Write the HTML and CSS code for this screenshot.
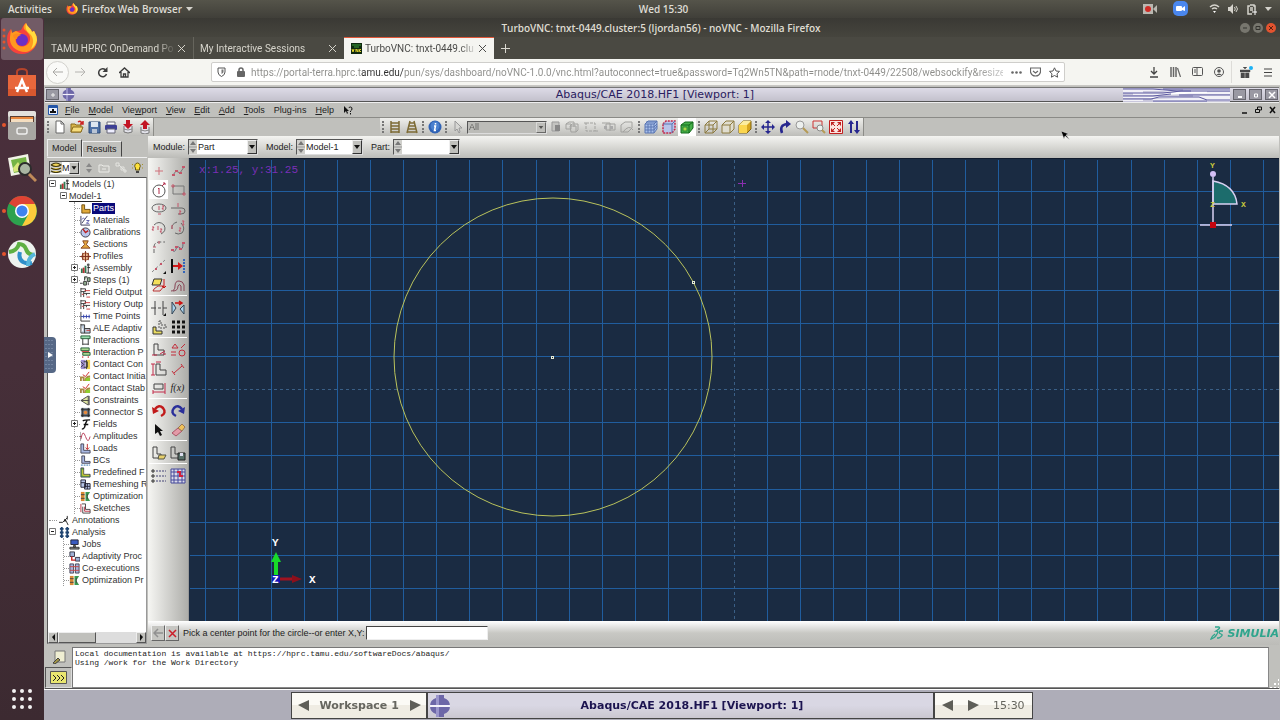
FILE: index.html
```
<!DOCTYPE html>
<html lang="en">
<head>
	<meta charset="utf-8">
	<title>TurboVNC: tnxt-0449.cluster:5 (ljordan56) - noVNC</title>
	<link rel="stylesheet" href="styles.css">
</head>
<body>

<!-- icons used more than once -->
<svg class="defs" aria-hidden="true">
	<symbol id="cde" viewBox="0 0 22 22">
		<path d="M7 0h8v3q6 2 6 8t-6 8v3H7v-3q-6-2-6-8t6-8z" fill="#6d67a8"/>
		<path d="M7 0h3v22H7z" fill="#9b96cc"/><path d="M1 10h20v2H1z" fill="#f4f2fb"/>
	</symbol>
	<symbol id="plus" viewBox="0 0 8 8"><path d="M.5.5h6v6h-6z" fill="#fff" stroke="#777"/><path d="M2 3.500h3M3.500 2v3" stroke="#222"/></symbol>
	<symbol id="minus" viewBox="0 0 8 8"><path d="M.5.5h6v6h-6z" fill="#fff" stroke="#777"/><path d="M2 3.500h3" stroke="#222"/></symbol>
	<symbol id="down" viewBox="0 0 8 12"><path d="M1 4h6L4 8z" fill="#111"/></symbol>
	<symbol id="spin" viewBox="0 0 8 14"><path d="M1 5l3-4 3 4zM1 9l3 4 3-4z" fill="#777"/><path d="M0 7h8" stroke="#999"/></symbol>
	<symbol id="assembly" viewBox="0 0 12 12"><path d="M1 11V6h2v5zM5 11V3h2v8z" fill="#2f7a52"/><path d="M3 11V5h2v6z" fill="#b33"/><path d="M9 3v8M8 5h3M7 11h5" stroke="#222"/><circle cx="9" cy="2" r="1.500" fill="#555"/></symbol>
	<symbol id="outputs" viewBox="0 0 12 12"><path d="M1 1v10M1 2h5v3H1M4 5v6M4 7h7M7 7v2" stroke="#333" fill="none"/><path d="M5 4h6M7 11h4M2 8h2" stroke="#c33"/></symbol>
	<symbol id="contact" viewBox="0 0 12 12"><path d="M1 11V7h3v4M6 11c0-3 2-5 5-5" stroke="#a84" fill="none" stroke-width="2"/><path d="M3 4l3 2 4-5" stroke="#c22" fill="none"/><path d="M6 11V8l5-1v4z" fill="#8fce2d"/></symbol>
	<symbol id="optim" viewBox="0 0 12 12"><path d="M1 1h4v10H1z" fill="#d98a35"/><path d="M6 1h5L8 6l3 5H6z" fill="#3b9b51"/><path d="M1 4h4M1 8h4M8 3v6" stroke="#444"/></symbol>
	<symbol id="interaction" viewBox="0 0 12 12"><path d="M1 1h10v3H1z" fill="#9bdcae" stroke="#225c38"/><path d="M3 4v7M9 4v7M3 10h6" stroke="#333"/></symbol>
</svg>

<header class="gnome-bar">
	<button class="bar-btn">Activities</button>
	<button class="bar-btn app-menu">
		<svg width="12" height="12" viewBox="0 0 32 32"><use href="#firefox"/></svg>
		Firefox Web Browser
		<svg width="7" height="5" viewBox="0 0 7 5"><path d="M0 0h7L3 4z" fill="#d5d3cc"/></svg>
	</button>
	<time class="clock">Wed 15:30</time>
	<div class="tray">
		<svg width="14" height="10" viewBox="0 0 14 10"><path d="M0 0h10v10H0zM10 5l4-4v8z" fill="#b9b7b0"/><circle cx="5" cy="5" r="3" fill="#cf2b25"/></svg>
		<svg class="zoom-app" width="16" height="16" viewBox="0 0 16 16"><rect width="15" height="15" rx="5" fill="#4a87ee"/><rect x="3" y="5" width="6" height="5" rx="1" fill="#fff"/><path d="M9 7l3-2v5L9 9z" fill="#fff"/></svg>
		<svg width="11" height="10" viewBox="0 0 11 10"><path d="M1 3q4.500-4 9 0M3 5q2.500-2 5 0" stroke="#d5d3cc" stroke-width="1.500" fill="none"/><path d="M4 7h3L5.500 9z" fill="#fff"/></svg>
		<svg width="11" height="10" viewBox="0 0 11 10"><path d="M0 3h2l3-3v10L2 7H0z" fill="#d5d3cc"/><path d="M6.500 3q1.500 2 0 4M8 2q3 3 0 6" stroke="#d5d3cc" fill="none"/></svg>
		<svg width="10" height="11" viewBox="0 0 10 11"><path d="M3 1h4v1h1v4M5 10H1V2h2M3 4h3M3 6h3" stroke="#d5d3cc" stroke-width="1.500" fill="none"/><path d="M5 8h5M8 6v5" stroke="#fff"/></svg>
		<svg width="7" height="5" viewBox="0 0 7 5"><path d="M0 0h7L3 4z" fill="#d5d3cc"/></svg>
	</div>
</header>

<div class="desktop">
<nav class="dock" aria-label="Dock">
	<button class="dock-item current" aria-label="Firefox">
		<svg class="dots" width="4" height="22" viewBox="0 0 4 22"><g fill="#e4552d"><circle cx="2" cy="2" r="1.500"/><circle cx="2" cy="8" r="1.500"/><circle cx="2" cy="14" r="1.500"/><circle cx="2" cy="20" r="1.500"/></g></svg>
		<svg width="32" height="32" viewBox="0 0 32 32">
			<g id="firefox">
				<path d="M16 31C7 31 1 25 1 16 1 11 3 8 5 6l1 4 4-2q3 0 5-1c2-3 2-5 5-7 1 4 5 5 6 9l2-1q3 5 3 9c0 8-7 14-15 14z" fill="#f5423c"/>
				<path d="M5 6l1 4 4-2 6 3c-6 0-8 6-5 10 4 5 12 2 13-4 1-5-3-8-6-11-1-3 1-5 2-6 1 4 5 5 6 9l2-1q3 5 3 9c0 6-5 11-11 12C9 29 3 22 4 14z" fill="#ff9a1f"/>
				<path d="M20 0c1 4 5 5 6 9l2-1q3 5 3 9c-1 4-3 7-6 9 3-6 3-11-1-15-4-3-5-6-4-11z" fill="#ffdc3e"/>
				<circle cx="16" cy="17" r="6" fill="#6a2fc4"/><path d="M7 12q4-3 8 0c-3 1-4 2-4 4-2 0-4-1-4-4z" fill="#ff8a1e"/>
			</g>
		</svg>
	</button>
	<button class="dock-item" aria-label="Ubuntu Software">
		<svg width="30" height="30" viewBox="0 0 30 30"><path d="M10 8V5q0-3 5-3t5 3v3" stroke="#b5442b" stroke-width="2" fill="none"/><path d="M1 8h28v21H1z" fill="#e8673c"/><path d="M1 22h28v7H1z" fill="#d8582f"/><path d="M10 25l5-12 5 12M8 21h14" stroke="#fff" stroke-width="2.500" fill="none"/></svg>
	</button>
	<button class="dock-item" aria-label="Files">
		<svg class="dots" width="4" height="4" viewBox="0 0 4 4"><circle cx="2" cy="2" r="2" fill="#e4552d"/></svg>
		<svg width="30" height="32" viewBox="0 0 30 32"><rect x="1" y="2" width="28" height="29" rx="3" fill="#b8b6b2"/><rect x="1" y="2" width="28" height="6" rx="2" fill="#e3e1dd"/><path d="M3 7h24v7H3z" fill="#5a3e32"/><path d="M4 8h22v5H4z" fill="#e9883f"/><path d="M4 10h22v4H4z" fill="#f4ddc0"/><path d="M1 13h28v15q0 3-3 3H4q-3 0-3-3z" fill="#a8a6a2"/><rect x="10" y="19" width="10" height="6" rx="2" fill="none" stroke="#eee" stroke-width="1.500"/></svg>
	</button>
	<button class="dock-item" aria-label="Image viewer">
		<svg width="30" height="32" viewBox="0 0 30 32"><path d="M1 6l20-4 3 18-20 4z" fill="#f1f3e6"/><path d="M4 8l15-3 2 13-14 3z" fill="#75b445"/><path d="M6 16l5-6 5 8-9 2z" fill="#d9e77d"/><circle cx="18" cy="17" r="6" fill="#a9b5a2" stroke="#2c2c2c" stroke-width="2"/><path d="M22 22l7 7" stroke="#c08a58" stroke-width="3"/></svg>
	</button>
	<button class="dock-item" aria-label="Chrome">
		<svg class="dots" width="4" height="4" viewBox="0 0 4 4"><circle cx="2" cy="2" r="2" fill="#e4552d"/></svg>
		<svg width="30" height="30" viewBox="0 0 30 30"><circle cx="15" cy="15" r="15" fill="#2da24e"/><path d="M15 15L2 7.500A15 15 0 0 1 28 7.500z" fill="#df4334"/><path d="M15 8h13a15 15 0 0 1-13 22l6-11z" fill="#fccb3c"/><circle cx="15" cy="15" r="7" fill="#fff"/><circle cx="15" cy="15" r="5.500" fill="#3f83ee"/></svg>
	</button>
	<button class="dock-item" aria-label="Cisco AnyConnect">
		<svg class="dots" width="4" height="4" viewBox="0 0 4 4"><circle cx="2" cy="2" r="2" fill="#e4552d"/></svg>
		<svg width="30" height="30" viewBox="0 0 30 30"><circle cx="15" cy="15" r="14" fill="#eef3ef"/><path d="M2 13q8-1 10-8 5 0 7 5 2 6 8 6" stroke="#5db043" stroke-width="4" fill="none"/><path d="M13 13q-2 7 3 10 4 2 9 1" stroke="#2f8fc9" stroke-width="4" fill="none"/><path d="M28 15q-7 3-7 12" stroke="#55b6dc" stroke-width="4" fill="none"/></svg>
	</button>
	<button class="dock-item apps" aria-label="Show applications">
		<svg width="22" height="22" viewBox="0 0 22 22"><g fill="#f4f2f3"><circle cx="3" cy="3" r="2"/><circle cx="11" cy="3" r="2"/><circle cx="19" cy="3" r="2"/><circle cx="3" cy="11" r="2"/><circle cx="11" cy="11" r="2"/><circle cx="19" cy="11" r="2"/><circle cx="3" cy="19" r="2"/><circle cx="11" cy="19" r="2"/><circle cx="19" cy="19" r="2"/></g></svg>
	</button>
</nav>

<main class="browser">
	<div class="browser-title">
		<h1>TurboVNC: tnxt-0449.cluster:5 (ljordan56) - noVNC - Mozilla Firefox</h1>
		<div class="win-buttons">
			<button aria-label="Minimize"><svg width="10" height="10" viewBox="0 0 10 10"><circle cx="5" cy="5" r="5" fill="#77766e"/><path d="M3 5h4" stroke="#33322e"/></svg></button>
			<button aria-label="Maximize"><svg width="10" height="10" viewBox="0 0 10 10"><circle cx="5" cy="5" r="5" fill="#77766e"/><path d="M3 3.500h4v3H3z" stroke="#33322e" fill="none"/></svg></button>
			<button aria-label="Close"><svg width="10" height="10" viewBox="0 0 10 10"><circle cx="5" cy="5" r="5" fill="#e2532f"/><path d="M3 3l4 4M7 3L3 7" stroke="#5a1f10"/></svg></button>
		</div>
	</div>
	<div class="tabs">
		<div class="tab"><a href="#">TAMU HPRC OnDemand Po</a><button aria-label="Close tab"><svg width="7" height="7" viewBox="0 0 7 7"><path d="M0 0l7 7M7 0L0 7" stroke="currentColor"/></svg></button></div>
		<div class="tab wide"><a href="#">My Interactive Sessions</a><button aria-label="Close tab"><svg width="7" height="7" viewBox="0 0 7 7"><path d="M0 0l7 7M7 0L0 7" stroke="currentColor"/></svg></button></div>
		<div class="tab active"><svg class="favicon" width="11" height="11" viewBox="0 0 11 11"><path d="M0 0h11v11H0z" fill="#102a10"/><path d="M1 2h9M3 4h5" stroke="#3aa03a"/><path d="M1 6l1 3 1-3M5 9V6l2 3V6M10 6.500H8.500v2H10" stroke="#e2d52c" fill="none"/></svg><a href="#">TurboVNC: tnxt-0449.clu</a><button aria-label="Close tab"><svg width="7" height="7" viewBox="0 0 7 7"><path d="M0 0l7 7M7 0L0 7" stroke="currentColor"/></svg></button></div>
		<button class="new-tab" aria-label="New tab"><svg width="9" height="9" viewBox="0 0 9 9"><path d="M4.500 0v9M0 4.500h9" stroke="#dad8d0"/></svg></button>
	</div>
	<div class="nav-bar">
		<button class="back" aria-label="Back"><svg width="11" height="10" viewBox="0 0 11 10"><path d="M11 5H1M5 1L1 5l4 4" stroke="#a9a8a5" fill="none"/></svg></button>
		<button aria-label="Forward"><svg width="11" height="10" viewBox="0 0 11 10"><path d="M0 5h10M6 1l4 4-4 4" stroke="#b4b3b0" fill="none"/></svg></button>
		<button aria-label="Reload"><svg width="11" height="11" viewBox="0 0 11 11"><path d="M9 3.500A4 4 0 1 0 9.500 7" stroke="#3c3c3c" stroke-width="1.500" fill="none"/><path d="M10.500 0v5h-5z" fill="#3c3c3c"/></svg></button>
		<button aria-label="Home"><svg width="11" height="11" viewBox="0 0 11 11"><path d="M0 6l5.500-5L11 6M2 5v5h7V5M4.500 10V7h2v3" stroke="#3c3c3c" stroke-width="1.300" fill="none"/></svg></button>
		<div class="url-box">
			<svg width="9" height="10" viewBox="0 0 9 10"><path d="M1 1h7v4q0 3-3.500 4.500Q1 8 1 5z" stroke="#555" fill="none"/><path d="M4.500 2.500h2V5q0 1-2 2z" fill="#777"/></svg>
			<svg class="lock" width="8" height="10" viewBox="0 0 8 10"><path d="M2 5V3q0-2 2-2t2 2v2" stroke="#666" stroke-width="1.500" fill="none"/><rect y="4" width="8" height="6" rx="1" fill="#666"/></svg>
			<input class="url" aria-label="Address" value="https://portal-terra.hprc.tamu.edu/pun/sys/dashboard/noVNC-1.0.0/vnc.html?autoconnect=true&amp;password=Tq2Wn5TN&amp;path=rnode/tnxt-0449/22508/websockify&amp;resize=">
			<button aria-label="Page actions"><svg width="11" height="3" viewBox="0 0 11 3"><g fill="#666"><circle cx="1.500" cy="1.500" r="1.300"/><circle cx="5.500" cy="1.500" r="1.300"/><circle cx="9.500" cy="1.500" r="1.300"/></g></svg></button>
			<button aria-label="Pocket"><svg width="11" height="10" viewBox="0 0 11 10"><path d="M.5 1h10v4q-1 4-5 4t-5-4z M3 4l2.500 2L8 4" stroke="#666" stroke-width="1.200" fill="none"/></svg></button>
			<button aria-label="Bookmark"><svg width="11" height="11" viewBox="0 0 11 11"><path d="M5.500.8L7 4l3.500.4L8 6.800l.6 3.400-3.100-1.700-3.100 1.700L3 6.800.5 4.400 4 4z" stroke="#555" fill="none"/></svg></button>
		</div>
		<div class="nav-tools">
			<button aria-label="Downloads"><svg width="10" height="11" viewBox="0 0 10 11"><path d="M5 0v7M2 4l3 3 3-3M1 10h8" stroke="#444" stroke-width="1.300" fill="none"/></svg></button>
			<button aria-label="Library"><svg width="11" height="10" viewBox="0 0 11 10"><path d="M1 0v10M3.500 0v10M6 0v10" stroke="#666" stroke-width="1.500"/><path d="M7.500 1l3 9" stroke="#666" stroke-width="1.200"/></svg></button>
			<button aria-label="Sidebar"><svg width="11" height="10" viewBox="0 0 11 10"><rect x=".5" y=".5" width="10" height="8" rx="1" stroke="#555" fill="none"/><path d="M5 1v8M2 3h2M2 5h2" stroke="#555"/></svg></button>
			<button aria-label="Account"><svg width="10" height="10" viewBox="0 0 10 10"><circle cx="5" cy="5" r="4.500" stroke="#555" fill="none"/><circle cx="5" cy="4" r="1.800" fill="#555"/><path d="M2 8q3-3 6 0z" fill="#555"/></svg></button>
			<span class="divider"></span>
			<button aria-label="What's new"><svg width="13" height="12" viewBox="0 0 13 12"><path d="M0 4h10v2H0zM1 7h3.500v5H1zM5.500 7H9v5H5.500zM3 1l2 2 2-2" fill="#4a4a4a" stroke="#4a4a4a" stroke-width=".5"/><circle cx="11" cy="2" r="2" fill="#1cb2f5"/></svg></button>
			<button aria-label="Menu"><svg width="8" height="9" viewBox="0 0 8 9"><path d="M0 1h8M0 4.500h8M0 8h8" stroke="#444"/></svg></button>
		</div>
	</div>

	<section class="remote">
		<button class="vnc-handle" aria-label="Show control bar"><svg width="12" height="36" viewBox="0 0 12 36"><path d="M2 3v30M5 3v30M8 3v30" stroke="#90a0bb" stroke-dasharray="1 3"/><path d="M4 15l5 3-5 3z" fill="#fff"/></svg></button>

		<div class="wm-title">
			<button class="wm-btn" aria-label="Window menu"><svg width="8" height="8" viewBox="0 0 8 8"><path d="M3 3h2v2H3z" stroke="#eee" fill="none"/></svg></button>
			<svg width="13" height="13"><use href="#cde"/></svg>
			<h2>Abaqus/CAE 2018.HF1 [Viewport: 1]</h2>
			<svg class="glitch" width="107" height="14" viewBox="0 0 107 14" preserveAspectRatio="none"><path d="M0 0h107v14H0z" fill="#c9c7dc"/><path d="M0 2h38l16 2h30M10 6h36l20-1h41M0 9h20l40 1h47M30 12h77M60 2h47M0 12h20M0 4h20M70 8h37" stroke="#fff" stroke-width="1.500" fill="none"/><path d="M0 1h30l24 2h14M40 1h67M0 5h40l18-2h49M0 8h30l18-2M56 7h51M0 11h28l8-2h40l8 3h23M30 13h54" stroke="#5b58a0" fill="none"/></svg>
			<button class="wm-btn" aria-label="Iconify"><svg width="8" height="8" viewBox="0 0 8 8"><path d="M2 6h4" stroke="#fff" stroke-width="2"/></svg></button>
			<button class="wm-btn" aria-label="Zoom"><svg width="8" height="8" viewBox="0 0 8 8"><path d="M2.500 3h3v3h-3z" stroke="#fff" fill="none"/></svg></button>
			<button class="wm-btn" aria-label="Close window"><svg width="8" height="8" viewBox="0 0 8 8"><path d="M1 1l6 6M7 1L1 7" stroke="#fff" stroke-width="1.500"/></svg></button>
		</div>

		<nav class="menu-bar">
			<svg width="10" height="10" viewBox="0 0 10 10"><path d="M.5.5h9v9h-9z" fill="#e7efff" stroke="#2456a8"/><path d="M1 1h8v2H1z" fill="#2456a8"/><path d="M2 7h6M5 4v2" stroke="#111" stroke-width="2"/></svg>
			<button><u>F</u>ile</button>
			<button><u>M</u>odel</button>
			<button>Vie<u>w</u>port</button>
			<button><u>V</u>iew</button>
			<button><u>E</u>dit</button>
			<button><u>A</u>dd</button>
			<button><u>T</u>ools</button>
			<button>Plu<u>g</u>-ins</button>
			<button><u>H</u>elp</button>
			<button aria-label="Context help"><svg width="10" height="9" viewBox="0 0 10 9"><path d="M1 0v7l2-2 1 3 1-1-1-2h2z" fill="#111"/><path d="M6 2q0-1 1.500-1T9 3q0 1-1.500 2v1M7.500 7v1.500" stroke="#111" fill="none"/></svg></button>
			<div class="mdi">
				<button aria-label="Minimize viewport"><svg width="7" height="8" viewBox="0 0 7 8"><path d="M1 7h5" stroke="#111" stroke-width="1.500"/></svg></button>
				<button aria-label="Restore viewport"><svg width="7" height="8" viewBox="0 0 7 8"><path d="M2.500 3V1h4v3H5M.5 3.500h4v3h-4z" stroke="#111" fill="none"/></svg></button>
				<button aria-label="Close viewport"><svg width="7" height="8" viewBox="0 0 7 8"><path d="M1 1l5 6M6 1L1 7" stroke="#111" stroke-width="1.500"/></svg></button>
			</div>
		</nav>

		<div class="tool-bar">
			<div class="tool-group">
				<i class="grip"></i>
				<button aria-label="New"><svg width="14" height="14" viewBox="0 0 14 14"><path d="M3 1h5l3 3v9H3z" fill="#fff" stroke="#666"/><path d="M8 1v3h3" stroke="#666" fill="none"/></svg></button>
				<button aria-label="Open"><svg width="14" height="14" viewBox="0 0 14 14"><path d="M1 4h4l1 1h5v7H1z" fill="#d9b64a" stroke="#8a6b1a"/><path d="M3 7h10l-2 5H1z" fill="#f6dc7c" stroke="#8a6b1a"/><path d="M8 2q3-2 4 2m-2 0h3V1" stroke="#c22" stroke-width="1.500" fill="none"/></svg></button>
				<button aria-label="Save"><svg width="14" height="14" viewBox="0 0 14 14"><path d="M2 2h11v11H2z" fill="#4f71a5" stroke="#2d4a77"/><path d="M4 2h7v5H4z" fill="#dfe7f0"/><path d="M5 9h5v4H5z" fill="#b9c4d4"/></svg></button>
				<button aria-label="Print"><svg width="14" height="14" viewBox="0 0 14 14"><path d="M3 2h8v3H3z" fill="#fff" stroke="#667"/><rect x="1" y="5" width="12" height="5" rx="1" fill="#3d3f95"/><path d="M3 9h8v4H3z" fill="#eef" stroke="#667"/></svg></button>
				<button aria-label="Import"><svg width="14" height="14" viewBox="0 0 14 14"><path d="M3 6v6q4 2 8 0V6" fill="#e4e4ec" stroke="#777"/><path d="M3 9q4 2 8 0" stroke="#888" fill="none"/><path d="M5 0h4v4h3L7 9 2 4h3z" fill="#c21524"/></svg></button>
				<button aria-label="Export"><svg width="14" height="14" viewBox="0 0 14 14"><path d="M3 7v6q4 2 8 0V7" fill="#e4e4ec" stroke="#777"/><path d="M3 10q4 2 8 0" stroke="#888" fill="none"/><path d="M5 9h4V5h3L7 0 2 5h3z" fill="#c21524"/></svg></button>
			</div>
			<div class="tool-group second">
				<i class="grip"></i>
				<button aria-label="Parallel"><svg width="14" height="14" viewBox="0 0 14 14"><path d="M3 1v12M11 1v12M3 3h8M3 6h8M3 9h8M3 12h8" stroke="#7d6b35" stroke-width="1.500"/></svg></button>
				<button aria-label="Perspective"><svg width="14" height="14" viewBox="0 0 14 14"><path d="M5 1L2 13M9 1l3 12M5 3h4M4 6h6M3 9h8M2 12h10" stroke="#7d6b35" stroke-width="1.500"/></svg></button>
				<i class="grip"></i>
				<button aria-label="Query"><svg width="14" height="14" viewBox="0 0 14 14"><circle cx="7" cy="7" r="6.500" fill="#2f62b5"/><circle cx="7" cy="6" r="4.500" fill="#4a80cf"/><path d="M7.500 3v1.500M6 6h1.500L6.500 10.500H8" stroke="#fff" stroke-width="1.500" fill="none"/></svg></button>
				<i class="grip"></i>
				<button class="wide" aria-label="Select"><svg width="14" height="14" viewBox="0 0 14 14"><path d="M4 1v10l2-2 2 4 1-1-1-4h3z" fill="#d7d7d4" stroke="#999"/></svg></button>
				<span class="drop disabled"><select aria-label="Selection filter" disabled><option>All</option></select><svg width="8" height="12"><use href="#down"/></svg></span>
				<button aria-label="Highlight"><svg width="14" height="14" viewBox="0 0 14 14"><path d="M3 2h7v9H3z" fill="#c4c4c1" stroke="#999"/><path d="M6 5h5v6H6z" fill="#888"/></svg></button>
				<button class="wide" aria-label="Nearest"><svg width="16" height="14" viewBox="0 0 16 14"><path d="M1 4l3-2h5v5M1 4h5v5H1zM5 6l2-2h6v6l-2 2H6zM5 6h6v6" fill="none" stroke="#a2a29f"/></svg></button>
				<button class="wide" aria-label="Drag shape"><svg width="16" height="14" viewBox="0 0 16 14"><path d="M3 3h9v8H3zM1 3h2M12 11h3" fill="none" stroke="#a2a29f" stroke-dasharray="3 1"/></svg></button>
				<button class="wide" aria-label="Inside"><svg width="16" height="14" viewBox="0 0 16 14"><path d="M1 3h8v8M5 4v6h9V4z" fill="none" stroke="#a2a29f"/><path d="M3 6h3v3H3zM9 6h3v3H9z" fill="#aaa"/></svg></button>
				<button class="wide" aria-label="Reset"><svg width="16" height="14" viewBox="0 0 16 14"><path d="M2 5l4-3h7v6l-4 4H2zM4 12q6-8 10-2" fill="none" stroke="#a2a29f"/></svg></button>
				<i class="grip"></i>
				<button class="wide" aria-label="Mesh"><svg width="14" height="14" viewBox="0 0 14 14"><path d="M1 4l3-3h9v8l-3 4H1z" fill="#a9c0ea" stroke="#5a76b3"/><path d="M1 4h9v9M10 4l3-3M4 4v9M7 4v9M1 7h9l3-3M1 10h9l3-4M2 2h10" stroke="#5a76b3" fill="none"/></svg></button>
				<button class="wide" aria-label="Seeds"><svg width="14" height="14" viewBox="0 0 14 14"><path d="M1 4l3-3h9v8l-3 4H1z" fill="#b9c4ea" stroke="#c3284a" stroke-width="1.500" stroke-dasharray="2 1"/><path d="M1 4h9v9M10 4l3-3" stroke="#5a76b3" fill="none"/></svg></button>
				<button class="wide pressed" aria-label="Geometry"><svg width="14" height="14" viewBox="0 0 14 14"><path d="M1 5l4-3h8v6l-4 5H1z" fill="#46b04a" stroke="#12681a"/><path d="M1 5h8v8M9 5l4-3" stroke="#12681a" fill="none"/><path d="M3 7h4v4H3z" fill="#a8d84a" stroke="#2d8a30"/></svg></button>
				<i class="grip"></i>
				<button aria-label="Wireframe"><svg width="14" height="14" viewBox="0 0 14 14"><path d="M1 5h8v8H1zM5 1h8v8H5zM1 5l4-4M9 5l4-4M9 13l4-4M1 13l4-4" fill="none" stroke="#8c7a3e"/></svg></button>
				<button aria-label="Hidden"><svg width="14" height="14" viewBox="0 0 14 14"><path d="M1 5l4-4h8v8l-4 4H1zM1 5h8v8M9 5l4-4" fill="#e0ddcf" stroke="#8c7a3e"/></svg></button>
				<button aria-label="Shaded"><svg width="14" height="14" viewBox="0 0 14 14"><path d="M1 5l4-4h8v8l-4 4H1z" fill="#d6a520" stroke="#7d6210"/><path d="M1 5h8v8H1z" fill="#fbd64f"/><path d="M1 5l4-4h8L9 5z" fill="#fbeca0"/></svg></button>
				<i class="grip"></i>
				<button aria-label="Pan"><svg width="14" height="14" viewBox="0 0 14 14"><path d="M7 2v10M2 7h10" stroke="#27278f" stroke-width="1.500"/><path d="M7 0l3 3H4zM7 14l3-3H4zM0 7l3-3v6zM14 7l-3-3v6z" fill="#27278f"/></svg></button>
				<button aria-label="Rotate"><svg width="14" height="14" viewBox="0 0 14 14"><path d="M4 13Q1 5 9 4" stroke="#27278f" stroke-width="2.500" fill="none"/><path d="M8 0l5 4-5 4z" fill="#27278f"/></svg></button>
				<button aria-label="Magnify"><svg width="14" height="14" viewBox="0 0 14 14"><circle cx="5" cy="5" r="4" fill="#edf0ee" stroke="#999"/><path d="M8 8l5 5" stroke="#b59a55" stroke-width="2"/></svg></button>
				<button aria-label="Box zoom"><svg width="14" height="14" viewBox="0 0 14 14"><path d="M1 1h9v7H1z" fill="none" stroke="#c33"/><circle cx="8" cy="8" r="3" fill="#edf0ee" stroke="#888"/><path d="M10 10l3 3" stroke="#b59a55" stroke-width="2"/></svg></button>
				<button class="wide" aria-label="Fit"><svg width="14" height="14" viewBox="0 0 14 14"><path d="M.5.5h13v13H.5z" fill="#fbe4e0" stroke="#c02020"/><path d="M2 2h4L2 6zM12 2v4L8 2zM2 12V8l4 4zM12 12H8l4-4z" fill="#c02020"/><path d="M3 3l3 3M11 3L8 6M3 11l3-3M11 11L8 8" stroke="#c02020"/></svg></button>
				<button class="wide" aria-label="Cycle views"><svg width="14" height="14" viewBox="0 0 14 14"><path d="M4 3v10M10 1v10" stroke="#27278f" stroke-width="2"/><path d="M4 0l3 4H1zM10 14l3-4H7z" fill="#27278f"/></svg></button>
			</div>
		</div>

		<div class="work">
			<aside class="model-side">
				<div class="side-tabs"><button class="on">Model</button><button>Results</button></div>
				<div class="tree-tools">
					<span class="drop db"><svg width="12" height="11" viewBox="0 0 12 11"><path d="M1 3q5-4 10 0-5 3-10 0M1 6q5 3 10 0M1 9q5 3 10 0" fill="#efd35a" stroke="#41380f" stroke-width="1.200"/></svg><select aria-label="Database"><option>M</option></select><svg width="8" height="12"><use href="#down"/></svg></span>
					<svg width="8" height="12" viewBox="0 0 8 12"><path d="M1 5l3-4 3 4zM1 7l3 4 3-4z" fill="#888"/></svg>
					<svg width="12" height="11" viewBox="0 0 12 11"><path d="M1 3h3l1 1h6v6H1zM4 7h4" fill="none" stroke="#ecece8"/></svg>
					<svg width="12" height="11" viewBox="0 0 12 11"><path d="M1 1h3v3H1zM4 3l5 5M6 5h3v3H6zM9 8h2v2H9z" fill="none" stroke="#e4e4e0"/></svg>
					<svg width="11" height="12" viewBox="0 0 11 12"><path d="M5.500 1a3 3 0 0 1 2 5v2h-4V6a3 3 0 0 1 2-5z" fill="#ffe23b" stroke="#6b5a10"/><path d="M4 9h3v2H4z" fill="#444"/><path d="M0 2l1 1M11 2l-1 1M0 6h1M10 6h1" stroke="#a8932a"/></svg>
				</div>
				<div class="tree-box">
				<ul class="tree">
					<li class="row root"><svg width="8" height="8"><use href="#minus"/></svg><svg width="11" height="11"><use href="#assembly"/></svg><span>Models (1)</span></li>
					<li class="row sub"><svg width="8" height="8"><use href="#minus"/></svg><span class="model-name">Model-1</span></li>
					<li>
						<ul class="branch">
							<li class="row"><svg width="11" height="11" viewBox="0 0 12 12"><path d="M2 2h3v5h6v4H2z" fill="#e0a93a" stroke="#6b4a0c"/></svg><span class="picked">Parts</span></li>
							<li class="row"><svg width="11" height="11" viewBox="0 0 12 12"><path d="M1 1v10h10M2 9l6-8" stroke="#335" fill="none"/><path d="M2 5q2-3 3-1M7 6h3L7 9h3" stroke="#55a" fill="none"/></svg><span>Materials</span></li>
							<li class="row"><svg width="11" height="11" viewBox="0 0 12 12"><circle cx="6" cy="6" r="5" fill="#b9c6ec" stroke="#334"/><path d="M3 2l3 4 3-2" stroke="#b22" stroke-width="1.500" fill="none"/></svg><span>Calibrations</span></li>
							<li class="row"><svg width="11" height="11" viewBox="0 0 12 12"><path d="M3 2h6L7 6l4 4H1l4-4z" fill="#e3a740" stroke="#83421c"/></svg><span>Sections</span></li>
							<li class="row"><svg width="11" height="11" viewBox="0 0 12 12"><circle cx="6" cy="6" r="4" fill="#eeb98e" stroke="#a4572f"/><path d="M6 0v12M0 6h12M3 2v8M9 2v8" stroke="#7b2c1b"/></svg><span>Profiles</span></li>
							<li class="row"><svg class="knob" width="8" height="8"><use href="#plus"/></svg><svg width="11" height="11"><use href="#assembly"/></svg><span>Assembly</span></li>
							<li class="row"><svg class="knob" width="8" height="8"><use href="#plus"/></svg><svg width="11" height="11" viewBox="0 0 12 12"><path d="M0 9h3M4 7h3v4H4zM8 3h3v4H8zM5 6V2h3M9 8v3" fill="#9b9" stroke="#333"/></svg><span>Steps (1)</span></li>
							<li class="row"><svg width="11" height="11"><use href="#outputs"/></svg><span>Field Output</span></li>
							<li class="row"><svg width="11" height="11"><use href="#outputs"/></svg><span>History Outp</span></li>
							<li class="row"><svg width="11" height="11" viewBox="0 0 12 12"><path d="M1 1v10h10" stroke="#333" fill="none"/><path d="M1 6h10M4 4v4M7 4v4M10 4v4" stroke="#34a"/></svg><span>Time Points</span></li>
							<li class="row"><svg width="11" height="11" viewBox="0 0 12 12"><path d="M1 1v10M1 2h4v9M5 6h6v5H1" stroke="#333" fill="#bcd"/><path d="M7 8h4" stroke="#c33"/></svg><span>ALE Adaptiv</span></li>
							<li class="row"><svg width="11" height="11"><use href="#interaction"/></svg><span>Interactions</span></li>
							<li class="row"><svg width="11" height="11" viewBox="0 0 12 12"><path d="M1 1h9v3H1zM3 6h8v3H3z" fill="#a9d68e" stroke="#225c38"/><path d="M2 5h8M3 10v2M9 10v2" stroke="#c33"/></svg><span>Interaction P</span></li>
							<li class="row"><svg width="11" height="11" viewBox="0 0 12 12"><path d="M1 1h5v10H1z" fill="#9c8dce"/><path d="M7 1h4v10H7z" fill="#ebd04d"/><path d="M1 3l3 3-3 3M7 1v10M4 3h4v6H4" stroke="#333" fill="none"/></svg><span>Contact Con</span></li>
							<li class="row"><svg width="11" height="11"><use href="#contact"/></svg><span>Contact Initia</span></li>
							<li class="row"><svg width="11" height="11"><use href="#contact"/></svg><span>Contact Stab</span></li>
							<li class="row"><svg width="11" height="11" viewBox="0 0 12 12"><path d="M1 6l8-5v10z" fill="#dfe6a3" stroke="#444"/><path d="M10 1v10M1 6h9" stroke="#444"/></svg><span>Constraints</span></li>
							<li class="row"><svg width="11" height="11" viewBox="0 0 12 12"><path d="M1 1h10v10H1z" fill="#7d8794"/><path d="M1 3h10M1 9h10M3 1v10M9 1v10" stroke="#222"/><circle cx="6" cy="6" r="2" fill="#e8893a"/></svg><span>Connector S</span></li>
							<li class="row"><svg class="knob" width="8" height="8"><use href="#plus"/></svg><svg width="11" height="11" viewBox="0 0 12 12"><path d="M3 2q2-1 8-1M8 1Q6 4 5 9q-1 2-3 2M4 6h5" stroke="#111" stroke-width="1.500" fill="none"/></svg><span>Fields</span></li>
							<li class="row"><svg width="11" height="11" viewBox="0 0 12 12"><path d="M0 6h2M1 9Q3-3 6 6q3 9 5 0" stroke="#b8405a" fill="none"/><path d="M0 1v10" stroke="#555"/></svg><span>Amplitudes</span></li>
							<li class="row"><svg width="11" height="11" viewBox="0 0 12 12"><path d="M1 1h3v7h7v3H1z" fill="#aab9e4" stroke="#445"/><path d="M8 1v6M6 5l2 2 2-2" stroke="#b22" fill="none"/></svg><span>Loads</span></li>
							<li class="row"><svg width="11" height="11" viewBox="0 0 12 12"><path d="M2 1h3v6h6v2H2z" fill="#aab9e4" stroke="#445"/><path d="M1 11h10" stroke="#26a" stroke-dasharray="2 1"/></svg><span>BCs</span></li>
							<li class="row"><svg width="11" height="11" viewBox="0 0 12 12"><path d="M1 1h3v7h7v3H1z" fill="#69b33f" stroke="#445"/><path d="M3 3v6h7" stroke="#e8c832" fill="none"/></svg><span>Predefined F</span></li>
							<li class="row"><svg width="11" height="11" viewBox="0 0 12 12"><path d="M1 1h5v8H1zM5 5h6v6H5z" fill="#b7c6e8" stroke="#223"/><path d="M5 8h6M8 5v6M1 4h5" stroke="#223"/></svg><span>Remeshing R</span></li>
							<li class="row"><svg width="11" height="11"><use href="#optim"/></svg><span>Optimization</span></li>
							<li class="row"><svg width="11" height="11" viewBox="0 0 12 12"><path d="M2 1h4v6h5v4H3V4" stroke="#444" fill="none"/><path d="M1 1v9M5 4v5h6" stroke="#b34" fill="none"/></svg><span>Sketches</span></li>
						</ul>
					</li>
					<li class="row root"><i class="gap"></i><svg width="11" height="11" viewBox="0 0 12 12"><path d="M0 8h4l5-5M8 7l2 4M9 1v4" stroke="#222" fill="none"/><path d="M5 7l1-3 3 3z" fill="#222"/></svg><span>Annotations</span></li>
					<li class="row root"><svg width="8" height="8"><use href="#minus"/></svg><svg width="11" height="11" viewBox="0 0 12 12"><path d="M1 2h4M1 6h4M1 10h4M7 2h4M7 6h4M7 10h4" stroke="#1f4470" stroke-width="2"/><path d="M3 0v12M9 0v12" stroke="#1f4470" stroke-width="2"/></svg><span>Analysis</span></li>
					<li>
						<ul class="branch near">
							<li class="row"><svg width="11" height="11" viewBox="0 0 12 12"><path d="M2 1h8v5H2z" fill="#3a5bc0" stroke="#223"/><path d="M1 9h10v2H1zM5 7h2v2H5z" fill="#888" stroke="#333"/></svg><span>Jobs</span></li>
							<li class="row"><svg width="11" height="11" viewBox="0 0 12 12"><path d="M1 1h5v5H1zM7 7h5v4H7z" fill="#9fb1d6" stroke="#334"/><path d="M3 6v4h4" stroke="#c22" stroke-width="1.500" fill="none"/></svg><span>Adaptivity Proc</span></li>
							<li class="row"><svg width="11" height="11" viewBox="0 0 12 12"><path d="M1 1h4v10H1zM7 1h4v10H7z" fill="#a6b5de" stroke="#445"/><path d="M1 4h10M1 8h10" stroke="#c44"/></svg><span>Co-executions</span></li>
							<li class="row"><svg width="11" height="11"><use href="#optim"/></svg><span>Optimization Pr</span></li>
						</ul>
					</li>
				</ul>
				<div class="h-scroll">
					<button aria-label="Scroll left"><svg width="5" height="7" viewBox="0 0 5 7"><path d="M4 0v7L1 3z" fill="#111"/></svg></button>
					<span class="thumb"></span>
					<button aria-label="Scroll right"><svg width="5" height="7" viewBox="0 0 5 7"><path d="M1 0v7l3-4z" fill="#111"/></svg></button>
				</div>
				</div>
			</aside>

			<div class="stage">
				<div class="module-bar">
					<label for="module">Module:</label>
					<span class="drop"><svg width="8" height="14"><use href="#spin"/></svg><select id="module" class="m1"><option>Part</option></select><svg width="8" height="12"><use href="#down"/></svg></span>
					<label for="model">Model:</label>
					<span class="drop"><svg width="8" height="14"><use href="#spin"/></svg><select id="model" class="m2"><option>Model-1</option></select><svg width="8" height="12"><use href="#down"/></svg></span>
					<label for="part">Part:</label>
					<span class="drop"><svg width="8" height="14"><use href="#spin"/></svg><select id="part" class="m2"><option></option></select><svg width="8" height="12"><use href="#down"/></svg></span>
				</div>
				<div class="stage-body">
					<div class="toolbox">
						<div class="tools">
							<button aria-label="Isolated point"><svg width="16" height="16" viewBox="0 0 16 16"><path d="M8 4v8M4 8h8" stroke="#d0707a"/></svg></button>
							<button aria-label="Lines"><svg width="16" height="16" viewBox="0 0 16 16"><path d="M3 12l3-4 4 2 4-6" stroke="#777" fill="none"/><path d="M2 12h3M5 8h3M9 10h3M12 4h3" stroke="#c4566a" stroke-width="2"/></svg></button>
							<button class="pressed" aria-label="Circle"><svg width="16" height="16" viewBox="0 0 16 16"><circle cx="8" cy="9" r="6" stroke="#555" fill="none"/><path d="M7 7l1-1v6M11 4l3-3M12 1h2v2" stroke="#b22d4a" fill="none"/></svg></button>
							<button aria-label="Rectangle"><svg width="16" height="16" viewBox="0 0 16 16"><path d="M3 4h11v8H3z" stroke="#777" fill="none"/><path d="M1 4h4M3 2v4M12 12h4M14 10v4" stroke="#c4566a"/></svg></button>
							<button aria-label="Ellipse"><svg width="16" height="16" viewBox="0 0 16 16"><ellipse cx="8" cy="7" rx="7" ry="4" stroke="#666" fill="none"/><path d="M8 5v4M11 5h2l-2 3h2M7 13h3" stroke="#c4566a" fill="none"/></svg></button>
							<button aria-label="Arc tangent"><svg width="16" height="16" viewBox="0 0 16 16"><path d="M1 7h11q3 0 3 3t-4 3H8" stroke="#666" fill="none"/><path d="M8 2v4M9 10h2l-2 3h2" stroke="#c4566a" fill="none"/></svg></button>
							<button aria-label="Arc center"><svg width="16" height="16" viewBox="0 0 16 16"><path d="M3 5q5-5 10 0 3 6-3 9" stroke="#666" fill="none"/><path d="M1 7h2L1 10h2M7 6v4M9 9h2l-2 3h2" stroke="#c4566a" fill="none"/></svg></button>
							<button aria-label="Arc three points"><svg width="16" height="16" viewBox="0 0 16 16"><path d="M2 9Q1 4 7 2M11 3q5 5 1 10-4 2-7 0" stroke="#666" fill="none"/><path d="M2 5v4M12 1h2l-1 2 1 2h-2M9 8h2l-2 3h2" stroke="#c4566a" fill="none"/></svg></button>
							<button aria-label="Fillet"><svg width="16" height="16" viewBox="0 0 16 16"><path d="M3 14V8q0-5 6-5h5" stroke="#666" fill="none" stroke-dasharray="4 2"/><path d="M2 8h3M8 2v3" stroke="#c4566a"/></svg></button>
							<button aria-label="Spline"><svg width="16" height="16" viewBox="0 0 16 16"><path d="M2 11q3 3 4-1t4-1 3-5" stroke="#667" fill="none"/><path d="M1 11h3M5 8h3M9 10h3M12 4h3" stroke="#c4566a" stroke-width="2"/></svg></button>
							<button aria-label="Construction line"><svg width="16" height="16" viewBox="0 0 16 16"><path d="M1 14L14 2" stroke="#888" stroke-dasharray="3 2"/><path d="M4 11h2M9 6h2" stroke="#c4566a" stroke-width="2"/><path d="M15 13v3h-3z" fill="#111"/></svg></button>
							<button aria-label="Project edges"><svg width="16" height="16" viewBox="0 0 16 16"><path d="M2 1v14" stroke="#111" stroke-width="2"/><path d="M14 1v14" stroke="#36b" stroke-dasharray="2 1" stroke-width="2"/><path d="M3 8h7" stroke="#d01818" stroke-width="2"/><path d="M8 4l5 4-5 4z" fill="#d01818"/></svg></button>
							<button aria-label="Project references"><svg width="16" height="16" viewBox="0 0 16 16"><path d="M3 2h8l-2 6H1z" fill="#f3df5a" stroke="#333"/><path d="M3 12l4-3h6l-4 5H2z" fill="none" stroke="#b33"/><path d="M13 2v9M11 9l2 2 2-2" stroke="#c11" fill="none"/></svg></button>
							<button aria-label="Offset"><svg width="16" height="16" viewBox="0 0 16 16"><path d="M1 14q4 0 4-5t4-5 5 4v6M3 14q5 0 5-5 1-3 3 0v5" stroke="#845" fill="none"/></svg></button>
						</div>
						<div class="tools">
							<button aria-label="Trim"><svg width="16" height="16" viewBox="0 0 16 16"><path d="M0 8h5M7 8h3M12 8h4M4 1v14M12 1v14" stroke="#444"/><path d="M15 13v3h-3z" fill="#111"/></svg></button>
							<button aria-label="Mirror"><svg width="16" height="16" viewBox="0 0 16 16"><path d="M2 2v12l4-6zM14 14V5l-4 4z" fill="#a8d2ec" stroke="#345"/><path d="M5 3h6M9 1l3 2-3 2" stroke="#c11" stroke-width="1.500" fill="none"/></svg></button>
							<button aria-label="Translate"><svg width="16" height="16" viewBox="0 0 16 16"><path d="M2 8h3v4h6v3H2z" fill="#e9dc62" stroke="#333"/><path d="M8 2h2v4h5v3H8z" fill="none" stroke="#555" stroke-dasharray="2 1"/></svg></button>
							<button aria-label="Pattern"><svg width="16" height="16" viewBox="0 0 16 16"><path d="M2 3h13M2 8h13M2 13h13" stroke="#111" stroke-width="3" stroke-dasharray="3 2"/></svg></button>
						</div>
						<div class="tools">
							<button aria-label="Auto-trim"><svg width="16" height="16" viewBox="0 0 16 16"><path d="M3 2h4v6h6v5H3z" fill="none" stroke="#444"/><path d="M1 13h5M9 12l5-3M12 12h3" stroke="#c22d4a"/></svg></button>
							<button aria-label="Constraints"><svg width="16" height="16" viewBox="0 0 16 16"><path d="M2 6l3-4 3 4zM11 6l4-4M1 10h5M1 13h5" fill="none" stroke="#c22d3a"/><circle cx="12" cy="11" r="3" fill="none" stroke="#c22d3a"/></svg></button>
							<button aria-label="Dimension shape"><svg width="16" height="16" viewBox="0 0 16 16"><path d="M5 3h4v6h6v5H5z" fill="none" stroke="#444"/><path d="M2 3v11M0 3h4M0 14h4M5 1h5" stroke="#c22d4a"/></svg></button>
							<button aria-label="Dimension"><svg width="16" height="16" viewBox="0 0 16 16"><path d="M4 12l8-7M2 10l3 4M11 3l3 4" stroke="#c22d3a"/></svg></button>
							<button aria-label="Edit dimension"><svg width="16" height="16" viewBox="0 0 16 16"><path d="M3 4h9v5H3z" fill="none" stroke="#444"/><path d="M2 12h12M2 10v4M14 3v11" stroke="#c22d4a"/></svg></button>
							<button class="fx">f(x)</button>
						</div>
						<div class="tools">
							<button aria-label="Undo"><svg width="16" height="16" viewBox="0 0 16 16"><path d="M4 6q4-5 8-1 4 5-2 8" stroke="#c11a1a" stroke-width="2.500" fill="none"/><path d="M1 4l1 7 6-3z" fill="#c11a1a"/></svg></button>
							<button aria-label="Redo"><svg width="16" height="16" viewBox="0 0 16 16"><path d="M12 6q-4-5-8-1-4 5 2 8" stroke="#2a2f9a" stroke-width="2.500" fill="none"/><path d="M15 4l-1 7-6-3z" fill="#2a2f9a"/></svg></button>
							<button aria-label="Pointer"><svg width="16" height="16" viewBox="0 0 16 16"><path d="M4 2v10l3-2 2 4 2-1-2-4h3z" fill="#111"/></svg></button>
							<button aria-label="Delete"><svg width="16" height="16" viewBox="0 0 16 16"><path d="M2 11l6-5 4 3-6 5z" fill="#e39aa7" stroke="#a56"/><path d="M8 6l4-4 3 3-3 4z" fill="#f0c25b" stroke="#975"/></svg></button>
						</div>
						<div class="tools">
							<button aria-label="Add sketch"><svg width="16" height="16" viewBox="0 0 16 16"><path d="M2 2h4v7h4v4H2z" fill="none" stroke="#444"/><path d="M8 10h7l-2 4H7z" fill="#e6cf6a" stroke="#554"/></svg></button>
							<button aria-label="Save sketch"><svg width="16" height="16" viewBox="0 0 16 16"><path d="M1 2h4v7h4v4H1z" fill="none" stroke="#444"/><path d="M8 8h7v7H8z" fill="#58706a" stroke="#222"/><path d="M10 8h3v3h-3z" fill="#dde"/></svg></button>
						</div>
						<div class="tools">
							<button aria-label="Options"><svg width="16" height="16" viewBox="0 0 16 16"><path d="M1 2h2v2H1zM1 7h2v2H1zM1 12h2v2H1z" fill="none" stroke="#333"/><path d="M5 3h10M5 8h10M5 13h10" stroke="#447" stroke-dasharray="2 1"/></svg></button>
							<button aria-label="Snap grid"><svg width="16" height="16" viewBox="0 0 16 16"><path d="M1 1h14v14H1z" fill="#dcdcea"/><path d="M1 1v14h14V1zM4 1v14M8 1v14M12 1v14M1 4h14M1 8h14M1 12h14" fill="none" stroke="#44489a"/><path d="M7 4h3v4h3" stroke="#d2203c" stroke-width="2" fill="none"/></svg></button>
						</div>
					</div>

					<div class="viewport">
						<svg class="sketch" width="100%" height="100%" shape-rendering="crispEdges">
							<g stroke="#205d9e" fill="none" transform="translate(.5 .5)">
								<path d="M16 0v900M49 0v900M82 0v900M115 0v900M148 0v900M181 0v900M214 0v900M247 0v900M280 0v900M313 0v900M347 0v900M380 0v900M413 0v900M446 0v900M479 0v900M512 0v900M578 0v900M611 0v900M644 0v900M677 0v900M710 0v900M743 0v900M776 0v900M809 0v900M842 0v900M875 0v900M908 0v900M942 0v900M975 0v900M1008 0v900M1041 0v900M1074 0v900"/>
								<path d="M0 32h2000M0 65h2000M0 98h2000M0 131h2000M0 164h2000M0 197h2000M0 263h2000M0 296h2000M0 330h2000M0 363h2000M0 396h2000M0 429h2000"/>
								<path d="M545 0v900M0 230h2000" stroke="#3a5f86" stroke-dasharray="3 3"/>
							</g>
							<circle cx="364" cy="198" r="159" fill="none" stroke="#b9c25c" shape-rendering="geometricPrecision"/>
							<path d="M362 197h2v2h-2zM503 122h2v2h-2z" fill="#1a2b42" stroke="#e8ecd6"/>
							<path d="M553 21v7M549 24h8" stroke="#8a2fb0"/>
							<!-- view triad -->
							<g shape-rendering="auto">
								<path d="M87 398v20" stroke="#18d92a" stroke-width="4"/><path d="M87 393l5 10h-10z" fill="#18d92a"/>
								<path d="M91 420h14" stroke="#a01320" stroke-width="3"/><path d="M103 416l10 4-10 4z" fill="#8c0f1b"/>
								<path d="M83 416h8v8h-8z" fill="#1414b4"/>
								<path d="M1024 22v23h24q-2-19-24-23z" fill="#1c6c6c" stroke="#d9d1f2" stroke-width="1.500"/>
								<path d="M1024 18v48M1011 66h32" stroke="#d9d1f2" stroke-width="1.500"/>
								<circle cx="1024" cy="15" r="3" fill="#d3bff5"/><path d="M1021 63h6v6h-6z" fill="#c40510"/>
							</g>
							<g class="axis"><text x="83" y="387">Y</text><text x="120" y="424">X</text><text x="83" y="424">Z</text></g>
							<g class="axis small"><text x="1021" y="9">Y</text><text x="1052" y="48">X</text><text x="1021" y="48">Z</text></g>
							<text class="coords" x="10" y="14">x:1.25, y:31.25</text>
						</svg>
					</div>
				</div>
				<form class="prompt">
					<button type="button" class="step" aria-label="Previous"><svg width="10" height="10" viewBox="0 0 10 10"><path d="M10 5H2M5 1L1 5l4 4" stroke="#909090" stroke-width="1.500" fill="none"/></svg></button>
					<button type="button" class="step" aria-label="Cancel"><svg width="9" height="9" viewBox="0 0 9 9"><path d="M1 1l7 7M8 1L1 8" stroke="#cc1f2a" stroke-width="1.500"/></svg></button>
					<label for="point">Pick a center point for the circle--or enter X,Y:</label>
					<input id="point" type="text" autofocus>
					<div class="brand"><svg width="14" height="14" viewBox="0 0 14 14"><path d="M5 1h4q2 1-3 4 3 0 1 3-2 4-6 5 1-3 4-5M13 5h-3q-2 2 1 3t-2 4H7" stroke="#2fa58d" stroke-width="1.300" fill="none"/></svg><span>SIMULIA</span></div>
				</form>
			</div>
		</div>

		<div class="message-area">
			<div class="message-tabs">
				<button aria-label="Message log"><svg width="14" height="14" viewBox="0 0 14 14"><path d="M3 1h10v11H3z" fill="#efeed2" stroke="#777"/><path d="M1 13l5-5 2 2-5 4z" fill="#a29445" stroke="#444"/></svg></button>
				<button class="cli" aria-label="Command line"><svg width="17" height="13" viewBox="0 0 17 13"><path d="M.5.5h16v12H.5z" fill="#e9e66f" stroke="#555"/><path d="M3 4l3 3-3 3M7 4l3 3-3 3M11 4l3 3-3 3" stroke="#222" fill="none"/></svg></button>
			</div>
			<pre class="log">Local documentation is available at https://hprc.tamu.edu/softwareDocs/abaqus/
Using /work for the Work Directory</pre>
			<i class="resize"></i>
		</div>

		<footer class="fluxbar">
			<div class="workspace">
				<button aria-label="Previous workspace"><svg width="11" height="11" viewBox="0 0 11 11"><path d="M11 0v11L0 5z" fill="#5e5e58"/></svg></button>
				<span>Workspace 1</span>
				<button aria-label="Next workspace"><svg width="11" height="11" viewBox="0 0 11 11"><path d="M0 0v11l11-6z" fill="#5e5e58"/></svg></button>
			</div>
			<button class="task"><svg width="22" height="22"><use href="#cde"/></svg><span>Abaqus/CAE 2018.HF1 [Viewport: 1]</span></button>
			<div class="flux-clock">
				<button aria-label="Previous window"><svg width="11" height="11" viewBox="0 0 11 11"><path d="M11 0v11L0 5z" fill="#5e5e58"/></svg></button>
				<button aria-label="Next window"><svg width="11" height="11" viewBox="0 0 11 11"><path d="M0 0v11l11-6z" fill="#5e5e58"/></svg></button>
				<time>15:30</time>
			</div>
		</footer>

		<svg class="pointer" width="10" height="11" viewBox="0 0 10 11"><path d="M0 0l8 3-3 1 4 5-5-4-1 3z" fill="#000" stroke="#eee" stroke-width=".5"/></svg>
	</section>
</main>
</div>
</body>
</html>
```
FILE: styles.css
```
* { box-sizing: border-box; }
html, body { height: 100%; }
body {
	margin: 0;
	display: flex;
	flex-direction: column;
	overflow: hidden;
	font-family: "Open Sans", "Noto Sans", sans-serif;
	font-size: 11px;
	color: #222;
	background: #3f2c35;
}
button {
	margin: 0;
	padding: 0;
	border: 0;
	background: none;
	font: inherit;
	color: inherit;
	display: flex;
	align-items: center;
	justify-content: center;
}
svg { display: block; flex: none; }
h1, h2, ul, pre { margin: 0; padding: 0; font-size: inherit; }
ul { list-style: none; }
a { color: inherit; text-decoration: none; }
.defs { position: absolute; width: 0; height: 0; }

/* gnome top bar */
.gnome-bar {
	height: 18px;
	flex: none;
	display: flex;
	align-items: center;
	padding: 0 8px;
	background: linear-gradient(#55544a, #403f39);
	color: #dedcd4;
	font-size: 10px;
	font-weight: 600;
}
.app-menu { margin-left: 14px; gap: 4px; }
.clock { flex: 1; text-align: center; margin-right: 9px; }
.tray { display: flex; align-items: center; gap: 8px; }
.zoom-app { margin: 0 12px 0 8px; }

.desktop { flex: 1; min-height: 0; display: flex; }

/* dock */
.dock {
	width: 44px;
	flex: none;
	display: flex;
	flex-direction: column;
	align-items: center;
	gap: 1px;
	background: linear-gradient(#4b2f3c, #462f39 50%, #3c2a31);
}
.dock-item { position: relative; width: 42px; height: 42px; border-radius: 3px; }
.dock-item.current { background: #725b66; }
.dots { position: absolute; left: 1px; }
.apps { margin-top: auto; }

/* firefox */
.browser { flex: 1; min-width: 0; display: flex; flex-direction: column; }
.browser-title {
	height: 19px;
	display: flex;
	align-items: center;
	padding-right: 4px;
	background: linear-gradient(#3a3934, #46453e);
	color: #dfdcd2;
}
.browser-title h1 { flex: 1; text-align: center; font-size: 10px; font-weight: 600; margin-left: 38px; }
.win-buttons { display: flex; gap: 3px; }
.tabs { height: 22px; display: flex; background: #4a4942; color: #d7d5cc; font-family: Roboto, sans-serif; font-size: 10px; }
.tab { width: 150px; display: flex; align-items: center; padding: 0 8px 0 7px; border-right: 1px solid #66655d; }
.tab a {
	flex: 1;
	overflow: hidden;
	white-space: nowrap;
	margin-right: 2px;
	-webkit-mask-image: linear-gradient(90deg, #000 85%, transparent);
	mask-image: linear-gradient(90deg, #000 85%, transparent);
}
.tab.wide { border-right: 0; padding-left: 6px; }
.tab.active { background: #f5f5f1; color: #4c4c4a; border: 0; border-top: 1px solid #e0583a; padding-right: 8px; }
.favicon { margin-right: 3px; }
.new-tab { width: 23px; }
.nav-bar {
	height: 27px;
	display: flex;
	align-items: center;
	padding: 0 8px 0 2px;
	background: #f5f5f1;
	border-bottom: 1px solid #c9c8c4;
}
.nav-bar > button { width: 22px; }
.nav-bar > .back { width: 23px; height: 23px; border: 1px solid #d2d1cd; border-radius: 50%; background: #fafaf8; }
.url-box {
	flex: 1;
	height: 20px;
	display: flex;
	align-items: center;
	gap: 8px;
	margin-left: 76px;
	padding: 0 4px 0 5px;
	background: #fff;
	border: 1px solid #cfcecb;
	border-radius: 2px;
}
.lock { margin-left: 3px; }
.url {
	flex: 1;
	min-width: 0;
	border: 0;
	outline: 0;
	padding: 0;
	margin-left: -2px;
	font: 10px Roboto, sans-serif;
	color: transparent;
	background: linear-gradient(90deg, #8c8c89 0 110px, #2e2e2e 110px 153px, #8c8c89 153px calc(100% - 30px), #ccc);
	-webkit-background-clip: text;
	background-clip: text;
}
.nav-tools { display: flex; align-items: center; gap: 11px; margin-left: 84px; }
.divider { width: 1px; height: 22px; background: #dddcd8; margin: 0 -3px 0 -4px; }

/* remote desktop */
.remote {
	position: relative;
	flex: 1;
	min-height: 0;
	display: flex;
	flex-direction: column;
	padding: 1px 1px 0;
	background: #c0c0bc;
	font-family: "Liberation Sans", Arial, sans-serif;
	font-size: 9px;
	line-height: 12px;
}
.vnc-handle {
	position: absolute;
	left: 0;
	top: 251px;
	width: 12px;
	height: 36px;
	background: #566886;
	border-radius: 0 4px 4px 0;
	z-index: 2;
}
.pointer { position: absolute; right: 209px; top: 45px; }
.wm-title {
	height: 15px;
	flex: none;
	display: flex;
	align-items: center;
	gap: 3px;
	padding: 0 1px;
	background: linear-gradient(#dddbe7, #c3c1cc);
	border-top: 1px solid #777;
	border-bottom: 1px solid #555;
}
.wm-title h2 {
	flex: 1;
	margin-left: 112px;
	text-align: center;
	color: #2a2060;
	font-family: "DejaVu Sans", sans-serif;
	font-size: 11px;
	font-weight: 400;
}
.wm-btn { width: 13px; height: 11px; background: #9a99a3; border: 1px solid #66656e; }
.menu-bar {
	height: 16px;
	flex: none;
	display: flex;
	align-items: center;
	gap: 9px;
	padding: 0 3px;
	border-top: 1px solid #eee;
	border-bottom: 1px solid #8a8a86;
}
.menu-bar button { display: block; }
.menu-bar > svg { margin-right: -2px; }
.mdi { display: flex; gap: 7px; margin-left: auto; }
.tool-bar { height: 18px; flex: none; display: flex; justify-content: flex-start; }
.tool-group {
	display: flex;
	align-items: center;
	background: linear-gradient(#efefec, #bdbdb9);
	border-right: 1px solid #8c8c88;
}
.tool-group.second { margin-left: 226px; }
.tool-group button { width: 17px; height: 18px; }
.tool-group .wide { width: 18px; }
.grip {
	width: 3px;
	height: 12px;
	margin: 0 1px 0 2px;
	border-left: 2px dotted #777;
}
.tool-group .pressed, .tools .pressed { background: #fff; }
.drop {
	display: flex;
	align-items: center;
	height: 16px;
	background: #fff;
	border: 1px solid;
	border-color: #555 #ddd #ddd #555;
}
.drop svg:last-child { background: #c0c0bc; border: 1px solid; border-color: #eee #333 #333 #eee; width: 10px; height: 14px; }
.drop svg:first-child { background: #d0d0cc; }
.drop select {
	appearance: none;
	-webkit-appearance: none;
	min-width: 0;
	border: 0;
	padding: 0 1px;
	background: none;
	font: inherit;
	color: #222;
}
.disabled { width: 80px; height: 13px; background: #bcbcb8; }
.disabled svg:last-child { height: 11px; opacity: .6; }
.disabled select { flex: 1; opacity: .6; }

.work { flex: 1; min-height: 0; display: grid; grid-template-columns: 103px 1fr; }
.model-side { display: flex; flex-direction: column; min-width: 0; min-height: 0; padding: 4px 1px 1px 2px; }
.side-tabs { display: flex; align-items: flex-end; height: 18px; border-bottom: 1px solid #eee; }
.side-tabs button { height: 16px; padding: 0 4px; border: 1px solid; border-color: #eee #444 transparent #eee; }
.side-tabs .on { height: 18px; }
.tree-tools { height: 19px; display: flex; align-items: center; gap: 5px; padding: 0 2px; }
.db { width: 31px; height: 14px; }
.db select { width: 8px; flex: 1; padding: 0; }
.drop.db svg:last-child { height: 12px; }
.tree-box {
	flex: 1;
	min-height: 0;
	display: flex;
	flex-direction: column;
	background: #fff;
	border: 1px solid;
	border-color: #555 #999 #999 #555;
	color: #333;
}
.tree { flex: 1; min-height: 0; overflow: hidden; }
.row { display: flex; align-items: center; height: 12px; white-space: nowrap; }
.root { padding-left: 1px; }
.root svg + svg, .gap + svg { margin: 0 2px; }
.gap { width: 8px; border-top: 1px dotted #999; }
.sub { padding-left: 12px; }
.sub span { margin-left: 1px; }
.model-name { border-bottom: 1px solid #222; line-height: 10px; }
.branch { margin-left: 26px; border-left: 1px dotted #999; }
.branch.near { margin-left: 15px; }
.branch .row::before { content: ""; flex: none; width: 5px; border-top: 1px dotted #999; }
.branch .row span { margin-left: 1px; padding: 0 1px; line-height: 11px; }
.branch .knob { margin: 0 0 0 -9px; }
.branch .knob + svg { margin-left: 1px; }
.branch .picked { background: #0a0a7a; color: #fff; }
.h-scroll { height: 11px; display: flex; background: #ddd; }
.h-scroll button, .thumb { width: 10px; background: #c0c0bc; border: 1px solid; border-color: #eee #555 #555 #eee; }
.thumb { width: 38px; margin-right: auto; }

.stage { display: flex; flex-direction: column; min-width: 0; min-height: 0; }
.module-bar {
	height: 22px;
	flex: none;
	display: flex;
	align-items: center;
	gap: 3px;
	padding-left: 5px;
	background: linear-gradient(#f4f4f1, #bcbcb8);
}
.module-bar .drop { margin-right: 5px; }
.m1 { width: 50px; }
.m2 { width: 47px; }
.stage-body { flex: 1; min-height: 0; display: flex; }
.toolbox { width: 41px; flex: none; padding: 3px 1px; background: linear-gradient(90deg, #f6f6f3, #aeaeaa); border-right: 1px solid #999; }
.tools {
	display: grid;
	grid-template-columns: 19px 19px;
	grid-auto-rows: 19px;
	padding-bottom: 1px;
	margin-bottom: 2px;
	border-bottom: 1px solid #fff;
}
.tools:last-child { border: 0; }
.fx { font: italic 10px "Liberation Serif", serif; }
.viewport { flex: 1; min-width: 0; background: #1a2b42; border-top: 1px solid #101a2c; overflow: hidden; }
.coords { font: 11px "Liberation Mono", monospace; fill: #7a2fb8; }
.axis { font: 700 11px "Liberation Mono", monospace; fill: #fff; }
.axis.small { font-size: 8px; fill: #c9c83c; }
.prompt {
	height: 24px;
	flex: none;
	display: flex;
	align-items: center;
	padding-left: 3px;
	background: linear-gradient(#fff, #c8c8c4 50%, #bcbcb8);
}
.step { width: 14px; height: 16px; border: 1px solid; border-color: #eee #666 #666 #eee; background: #c6c6c2; }
.prompt label { margin: 0 1px 0 4px; }
.prompt input {
	width: 122px;
	height: 14px;
	padding: 0 2px;
	border: 1px solid;
	border-color: #444 #eee #eee #444;
	outline: 0;
	background: #fff;
	font: inherit;
}
.brand { margin-left: auto; display: flex; align-items: center; gap: 3px; color: #2fa58d; font: italic 700 11px "DejaVu Sans", sans-serif; }

.message-area { height: 44px; flex: none; display: flex; padding-top: 2px; border-bottom: 1px solid #555; }
.message-tabs { width: 27px; display: flex; flex-direction: column; }
.message-tabs button { flex: 1; }
.message-tabs .cli { border: 1px solid; border-color: #555 #ddd #ddd #555; }
.log {
	flex: 1;
	padding: 1px 2px;
	background: #fff;
	border: 1px solid;
	border-color: #777 #888 #888 #777;
	font: 8px/9px "Liberation Mono", monospace;
}
.resize { width: 10px; height: 10px; align-self: flex-end; background: radial-gradient(#fff 1px, transparent 1px) 0 0 / 4px 4px; clip-path: polygon(100% 0, 100% 100%, 0 100%); }
.fluxbar {
	height: 31px;
	flex: none;
	display: flex;
	justify-content: center;
	padding: 2px 0 1px;
	margin: 0 -1px;
	border-top: 1px solid #fff;
	background: #aeadb8;
	color: #66665f;
	font-family: "DejaVu Sans", sans-serif;
	font-size: 11px;
}
.workspace, .flux-clock {
	display: flex;
	align-items: center;
	justify-content: space-around;
	background: linear-gradient(#fbfaf5 50%, #efece3 50%);
	border: 1px solid #444;
}
.workspace { width: 136px; font-weight: 700; }
.flux-clock { width: 99px; }
.task {
	width: 41%;
	padding-left: 1px;
	background: linear-gradient(#d9d7e3 50%, #cac7d0);
	border: 1px solid #444;
	color: #1c1450;
	font-weight: 700;
}
.task span { flex: 1; }
```
